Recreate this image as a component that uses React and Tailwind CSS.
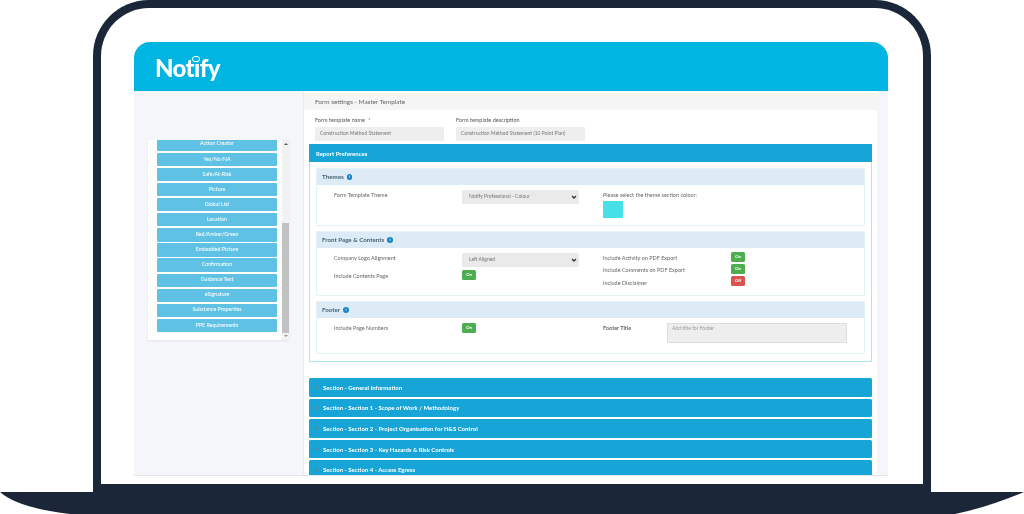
const fields = [
  "Yes/No/NA",
  "Safe/At-Risk",
  "Picture",
  "Global List",
  "Location",
  "Red/Amber/Green",
  "Embedded Picture",
  "Confirmation",
  "Guidance Text",
  "eSignature",
  "Substance Properties",
  "PPE Requirements",
];

const sections = [
  "Section - General Information",
  "Section - Section 1 - Scope of Work / Methodology",
  "Section - Section 2 - Project Organisation for H&S Control",
  "Section - Section 3 - Key Hazards & Risk Controls",
  "Section - Section 4 - Access Egress",
];

function Toggle({ off }) {
  return (
    <span className={`flex h-[10px] w-[14px] items-center justify-center rounded-[1.5px] text-[4.5px] font-bold text-white ${off ? "bg-[#d9534f]" : "bg-[#4cae4f]"}`}>
      {off ? "Off" : "On"}
    </span>
  );
}

function FakeSelect({ value }) {
  return (
    <div className="flex h-[14px] w-[117px] items-center justify-between rounded-[1.5px] bg-[#eaeaea] pl-[7px] pr-[2px] text-[5px] text-[#777]">
      <span>{value}</span>
      <svg width="6" height="4" viewBox="0 0 6 4">
        <path d="M1 1L3 3L5 1" fill="none" stroke="#333" strokeWidth="1.3" />
      </svg>
    </div>
  );
}

function Card({ title, height, children }) {
  return (
    <div className={`rounded-[1.5px] p-px shadow-[inset_0_0_0_1px_#e6f1f6] ${height}`}>
      <div className="flex h-[16px] items-center gap-[3px] bg-[#dcebf6] pl-[5px] text-[6.2px] font-bold text-[#47657a]">
        {title}
        <span className="flex h-[5.5px] w-[5.5px] items-center justify-center rounded-full bg-[#1683c6] text-[4px] leading-none text-white">i</span>
      </div>
      {children}
    </div>
  );
}

const label = "text-[5.5px] text-[#666]";

export default function App() {
  return (
    <div className="flex h-[514px] w-[1024px] flex-col overflow-hidden bg-white font-['Lato',sans-serif]">
      {/* laptop lid */}
      <div className="mx-[93px] h-[484px] shrink-0 rounded-t-[56px] border-x-8 border-t-8 border-[#1b2638] pl-[33px] pr-[35px] pt-[34px]">
        <div className="flex h-[442px] flex-col blur-[0.35px]">
          <div className="flex h-[49px] shrink-0 items-center rounded-t-[16px] bg-[#00b5e2] pl-[21px]">
            <span className="relative mt-[2px] text-[24px] font-black leading-none tracking-[-0.6px] text-white">
              Notify
              <span className="absolute left-[37px] top-[0px] h-[6px] w-[8px] rounded-[3px] border-[1.5px] border-white bg-[#00b5e2]"></span>
            </span>
          </div>

          <div className="flex h-[385px] shrink-0 border-b border-[#e6e6e6] bg-[#f4f6fa]">
            {/* form field palette */}
            <div className="w-[170px] shrink-0 border-r border-[#e9ebef] pl-[14px] pt-[49px]">
              <div className="flex h-[200px] w-[141px] bg-white pl-[9px] shadow-[0_1px_2px_rgba(0,0,0,0.08)]">
                <div className="flex w-[120px] flex-col gap-[1.8px]">
                  <div className="flex h-[11px] items-start justify-center rounded-b-[1px] bg-[#5fc2e4] pt-[1px] text-[5.25px] font-medium leading-none text-white">Action Creator</div>
                  {fields.map((name) => (
                    <div key={name} className="flex h-[13.3px] items-center justify-center rounded-[1px] bg-[#5fc2e4] text-[5.25px] font-medium text-white">
                      {name}
                    </div>
                  ))}
                </div>
                <div className="ml-[5px] flex w-[7px] flex-col items-center justify-between bg-[#f1f1f1]">
                  <span className="mt-[3px] h-0 w-0 border-x-[2px] border-b-[2.5px] border-x-transparent border-b-[#555]"></span>
                  <span className="mt-[76px] h-[110px] w-full bg-[#c1c1c1]"></span>
                  <span className="mb-[3px] h-0 w-0 border-x-[2px] border-t-[2.5px] border-x-transparent border-t-[#999]"></span>
                </div>
              </div>
            </div>

            {/* form settings */}
            <div className="flex w-[573px] shrink-0 flex-col overflow-hidden bg-white pt-[2px]">
              <div className="flex h-[17px] shrink-0 items-center bg-[#f5f5f5] pl-[11px] text-[6.4px] text-[#666]">Form settings - Master Template</div>
              <div className="flex h-[34px] shrink-0 gap-[12px] pl-[11px] pt-[6px]">
                <div className="w-[129px]">
                  <div className="flex h-[9px] items-center gap-[3px] text-[5.5px] text-[#555]">
                    Form template name <span className="text-[#e04040]">*</span>
                  </div>
                  <div className="mt-[1.5px] flex h-[14px] items-center rounded-[1px] bg-[#eeeeee] pl-[5px] text-[5px] text-[#777]">Construction Method Statement</div>
                </div>
                <div className="w-[129px]">
                  <div className="flex h-[9px] items-center text-[5.5px] text-[#555]">Form template description</div>
                  <div className="mt-[1.5px] flex h-[14px] items-center rounded-[1px] bg-[#eeeeee] pl-[5px] text-[5px] text-[#777]">Construction Method Statement (10 Point Plan)</div>
                </div>
              </div>

              <div className="mx-[5px] h-[218px] shrink-0 rounded-[1.5px] shadow-[inset_0_0_0_1px_#a8e8f2]">
                <div className="flex h-[18px] items-center bg-[#16a5d6] pl-[7px] text-[6px] font-bold text-white">Report Preferences</div>
                <div className="flex flex-col gap-[5px] px-[7px] pt-[6px]">
                  <Card title="Themes" height="h-[58px]">
                    <div className="grid grid-cols-[128px_141px_1fr] pl-[17px] pt-[5px]">
                      <div className={`${label} pt-[1px]`}>Form Template Theme</div>
                      <FakeSelect value="Notify Professional - Colour" />
                      <div>
                        <div className={`${label} pt-[1px]`}>Please select the theme section colour:</div>
                        <div className="mt-[2px] h-[17px] w-[20px] bg-[#45e0e8]"></div>
                      </div>
                    </div>
                  </Card>
                  <Card title="Front Page & Contents" height="h-[65px]">
                    <div className="grid grid-cols-[128px_141px_128px_1fr] pl-[17px] pt-[5px]">
                      <div>
                        <div className={`${label} pt-[1px]`}>Company Logo Alignment</div>
                        <div className={`${label} mt-[10px]`}>Include Contents Page</div>
                      </div>
                      <div>
                        <FakeSelect value="Left Aligned" />
                        <div className="mt-[3px]"><Toggle /></div>
                      </div>
                      <div className="flex flex-col gap-[4px] pt-[1px]">
                        <div className={label}>Include Activity on PDF Export</div>
                        <div className={label}>Include Comments on PDF Export</div>
                        <div className={label}>Include Disclaimer</div>
                      </div>
                      <div className="-mt-[1px] flex flex-col gap-[2px]">
                        <Toggle />
                        <Toggle />
                        <Toggle off />
                      </div>
                    </div>
                  </Card>
                  <Card title="Footer" height="h-[53px]">
                    <div className="grid grid-cols-[128px_141px_64px_1fr] pl-[17px] pt-[5px]">
                      <div className={`${label} pt-[1px]`}>Include Page Numbers</div>
                      <Toggle />
                      <div className={`${label} pt-[1px] font-bold`}>Footer Title</div>
                      <div className="h-[20px] w-[180px] rounded-[1px] bg-[#eeeeee] pl-[5px] pt-[2px] text-[5px] text-[#999] shadow-[inset_0_0_0_1px_#dddddd]">Add title for Footer</div>
                    </div>
                  </Card>
                </div>
              </div>

              <div className="mx-[5px] mt-[16px] flex shrink-0 flex-col gap-[2px]">
                {sections.map((name) => (
                  <div key={name} className="flex h-[18.6px] shrink-0 items-center gap-[4px] rounded-[1.5px] bg-[#16a5d6] pl-[7px] text-[6px] font-bold text-white">
                    <span className="h-0 w-0 border-y-[2px] border-l-[3px] border-y-transparent border-l-[#4b8aa5]"></span>
                    {name}
                  </div>
                ))}
              </div>
            </div>
          </div>
        </div>
      </div>

      {/* laptop base */}
      <svg width="1024" height="30" viewBox="0 0 1024 30" className="shrink-0">
        <path d="M93 0H931V8H1024Q985 24 955 30H70Q18 24 0 8H93Z" fill="#1b2638" />
      </svg>
    </div>
  );
}
